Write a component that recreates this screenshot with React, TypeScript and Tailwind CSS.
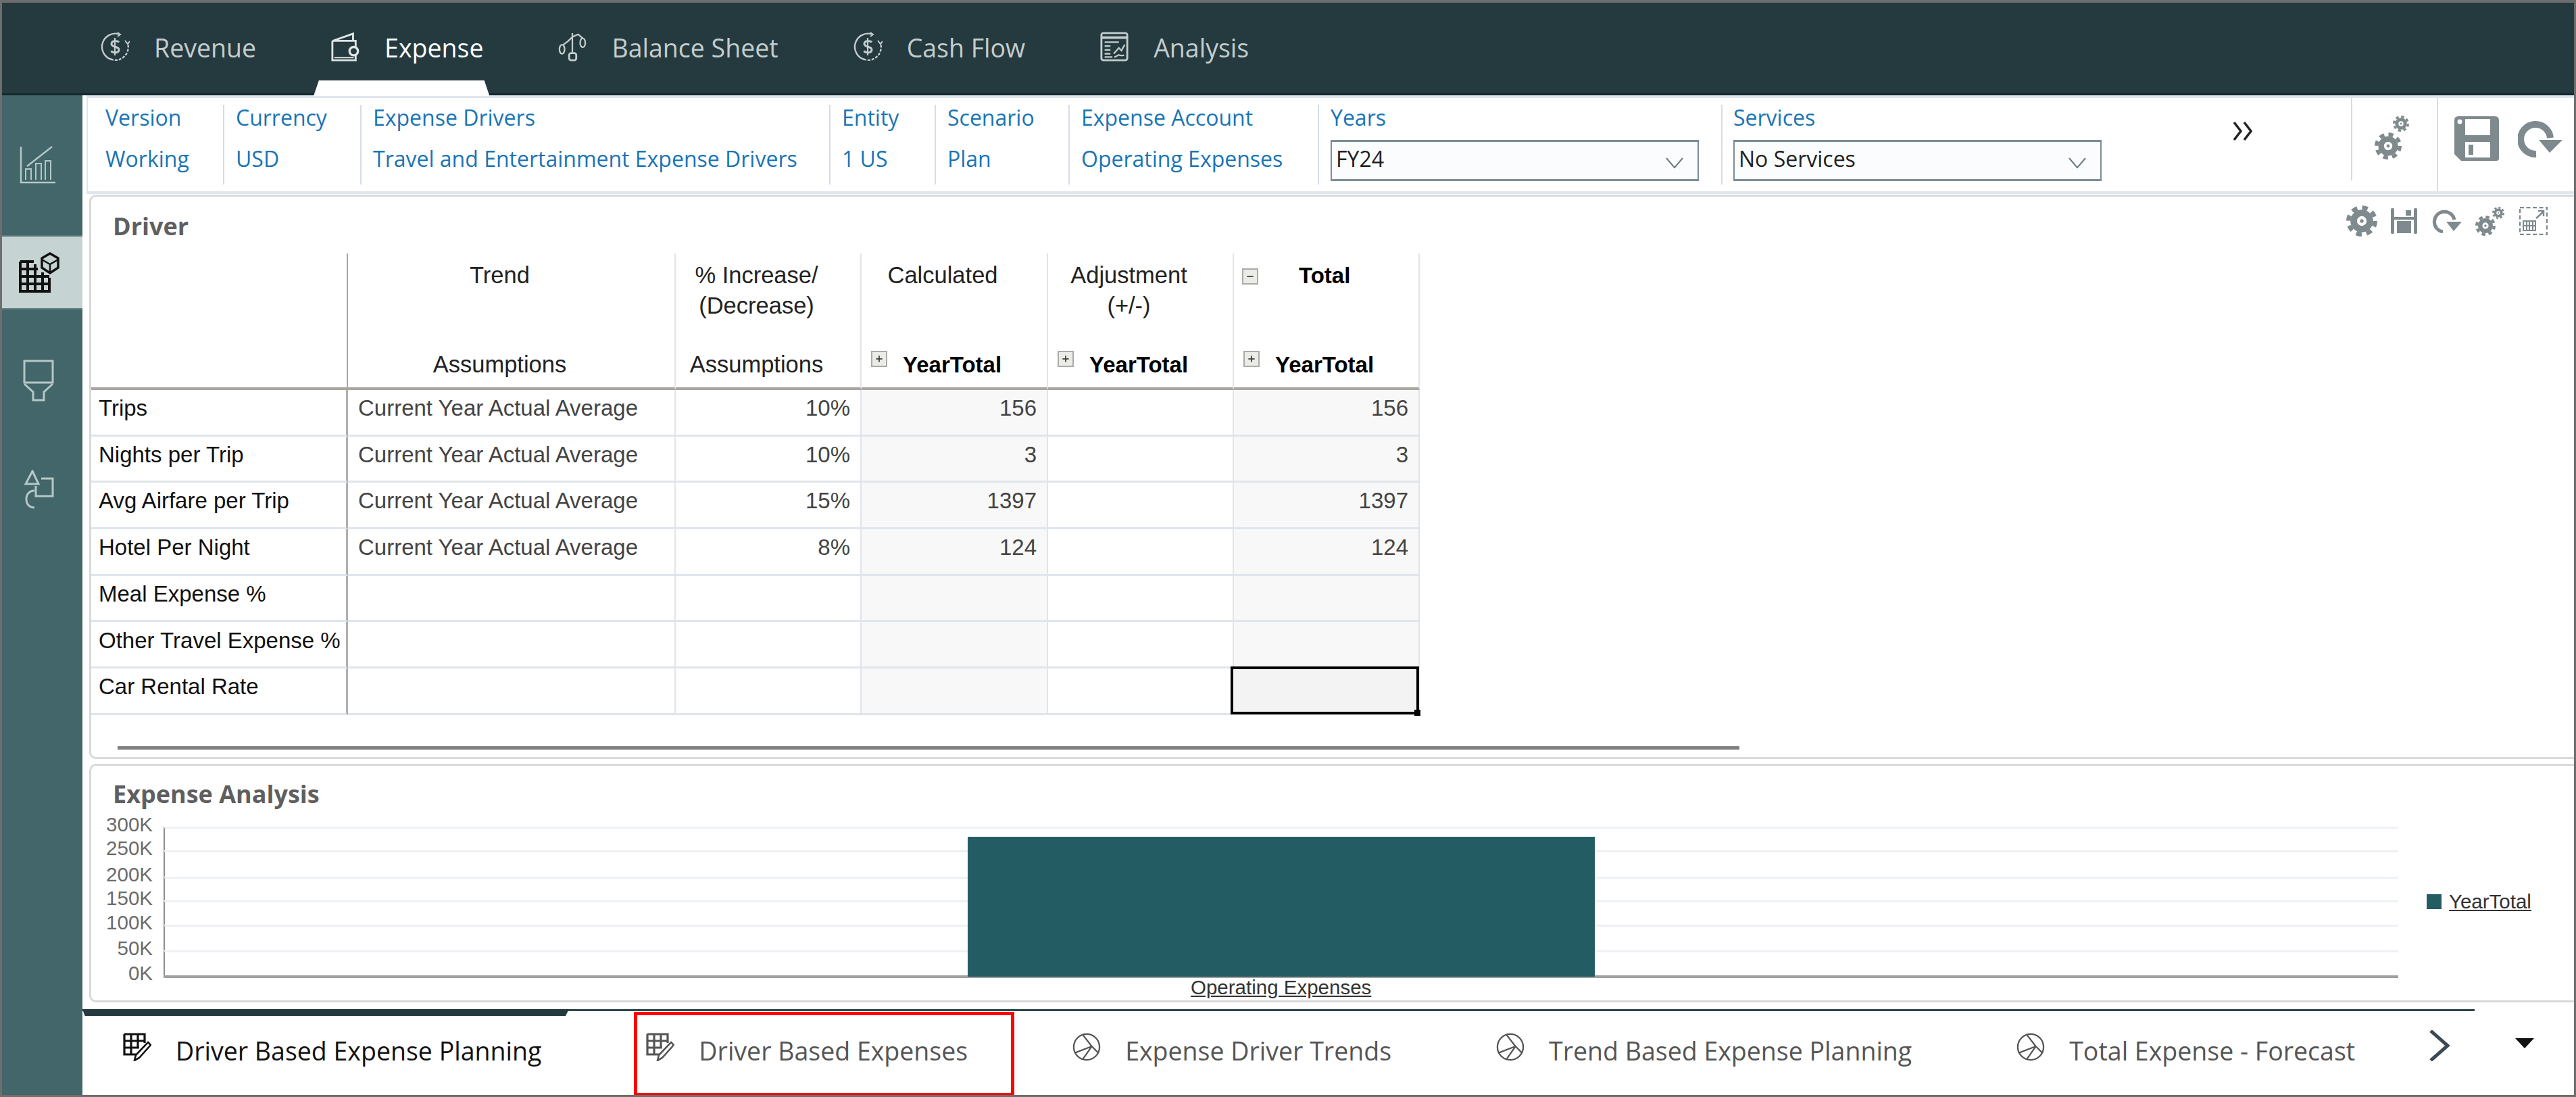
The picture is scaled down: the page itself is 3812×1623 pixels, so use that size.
import React from "react";

const Gear = ({ cx, cy, r }: { cx: number; cy: number; r: number }) => (
  <g fill="none" stroke="currentColor">
    <circle cx={cx} cy={cy} r={r * 0.52} strokeWidth={r * 0.42} />
    <circle cx={cx} cy={cy} r={r * 0.86} strokeWidth={r * 0.28} strokeDasharray={`${r * 0.36} ${r * 0.315}`} />
    <circle cx={cx} cy={cy} r={r * 0.12} fill="currentColor" stroke="none" />
  </g>
);

const Gears = ({ className }: { className: string }) => (
  <svg viewBox="0 0 52 66" className={className}>
    <Gear cx={20} cy={45} r={20} />
    <Gear cx={39} cy={12} r={12} />
  </svg>
);

const DollarCycle = ({ className }: { className: string }) => (
  <svg viewBox="0 0 44 44" className={className} fill="none" stroke="currentColor" strokeWidth="2.4">
    <path d="M28 3.5A19.5 19.5 0 0 0 17 41" />
    <path d="M16 40.5A19.5 19.5 0 0 0 27 41.5A19.5 19.5 0 0 0 41 17" strokeDasharray="4 2" />
    <path d="M26 1l4 3-4 3M37 13l4 5 3-4" strokeWidth="2" />
    <path d="M28 15.5c-2-2.500-11-3-11 2.500 0 5.500 11 3 11 8.500 0 5.500-9 5-11.500 2" strokeWidth="3" />
    <path d="M22 9v26" strokeWidth="2.2" />
  </svg>
);

const WalletIcon = ({ className }: { className: string }) => (
  <svg viewBox="0 0 44 46" className={className} fill="none" stroke="currentColor" strokeWidth="3">
    <path d="M3 14L34 3v10" />
    <path d="M2 14h36v11M38 36v8H2V14" />
    <circle cx="35" cy="30" r="6.500" strokeWidth="3.500" />
    <path d="M5 40h30" strokeWidth="2" />
  </svg>
);

const ScaleIcon = ({ className }: { className: string }) => (
  <svg viewBox="0 0 44 46" className={className} fill="none" stroke="currentColor" strokeWidth="2.400">
    <path d="M22 2v30M22 8l-6 6-8 6M22 8l9-4 7 6" />
    <ellipse cx="6" cy="27" rx="4" ry="7" />
    <ellipse cx="38" cy="17" rx="4" ry="7" />
    <rect x="17" y="33" width="11" height="11" rx="3" strokeWidth="3" />
  </svg>
);

const AnalysisIcon = ({ className }: { className: string }) => (
  <svg viewBox="0 0 44 46" className={className} fill="none" stroke="currentColor" strokeWidth="2.400">
    <rect x="2" y="2" width="40" height="42" rx="3" strokeWidth="3" />
    <path d="M2 9h40" strokeWidth="4" />
    <path d="M7 16h22M7 22h9M7 28h9M7 34h9M7 39h12" />
    <path d="M21 34l8-9 4 4 5-9" />
    <path d="M22 39c3 0 5-3 7-3s4 2 8 0" />
  </svg>
);

const ChartSideIcon = ({ className }: { className: string }) => (
  <svg viewBox="0 0 54 56" className={className} fill="none" stroke="currentColor" strokeWidth="2">
    <path d="M2 1v53h51" strokeWidth="2.500" />
    <path d="M11 30L48 1" strokeWidth="2.500" />
    <path d="M9 50V34h8v16M24 50V26h8v24M38 50V22h8v28" />
  </svg>
);

const GridCubeIcon = ({ className }: { className: string }) => (
  <svg viewBox="0 0 62 60" className={className} fill="none" stroke="#111">
    <path d="M3 14h20M3 14v44h43V38M3 25h26M3 36h43M3 47h43M14 14v44M25 18v40M36 30v28" strokeWidth="4" />
    <path d="M47 2l12 7v14l-12 8-12-8V9z" strokeWidth="3.500" />
    <path d="M35 11l12 7 12-7M47 18v12" strokeWidth="2.500" />
  </svg>
);

const FunnelIcon = ({ className }: { className: string }) => (
  <svg viewBox="0 0 46 62" className={className} fill="none" stroke="currentColor" strokeWidth="3">
    <rect x="2" y="2" width="42" height="32" />
    <path d="M2 36l13 12v12h16V48l13-12" />
  </svg>
);

const ShapesIcon = ({ className }: { className: string }) => (
  <svg viewBox="0 0 46 58" className={className} fill="none" stroke="currentColor" strokeWidth="3">
    <path d="M13 2l9 19H3z" />
    <path d="M26 13h17v26H18V24" />
    <path d="M16 31a11 12 0 0 0-12 13c0 7 5 12 12 12" />
  </svg>
);

const GridPencilIcon = ({ className }: { className: string }) => (
  <svg viewBox="0 0 42 42" className={className} fill="none" stroke="currentColor" strokeWidth="3.200">
    <path d="M2 2h30v13M2 2v30h17M2 12h30M2 22h22M12 2v30M22 2v20" />
    <path d="M37 14l4 4-17 19-7 4 2-8z" strokeWidth="2.600" />
  </svg>
);

const PieLinesIcon = ({ className }: { className: string }) => (
  <svg viewBox="0 0 44 44" className={className} fill="none" stroke="currentColor" strokeWidth="2.400">
    <circle cx="22" cy="22" r="20" />
    <path d="M16 3l14 18-14 20M4 31l26-10 10 10" />
  </svg>
);

const ToggleBox = ({ minus }: { minus?: boolean }) => (
  <span className="w-[24px] h-[24px] shrink-0 flex items-center justify-center bg-[#ecece6] border-2 border-[#a9aca8] -translate-y-[9px]">
    <svg viewBox="0 0 12 12" className="w-[14px] h-[14px]" stroke="#333" strokeWidth="1.400">
      <path d="M2 6h8" />
      {!minus && <path d="M6 2v8" />}
    </svg>
  </span>
);

const topTabs = [
  { label: "Revenue", Icon: DollarCycle },
  { label: "Expense", Icon: WalletIcon, active: true },
  { label: "Balance Sheet", Icon: ScaleIcon },
  { label: "Cash Flow", Icon: DollarCycle },
  { label: "Analysis", Icon: AnalysisIcon },
];

const povItems = [
  { label: "Currency", value: "USD", width: "w-[203px]" },
  { label: "Expense Drivers", value: "Travel and Entertainment Expense Drivers", width: "w-[694px]" },
  { label: "Entity", value: "1 US", width: "w-[156px]" },
  { label: "Scenario", value: "Plan", width: "w-[198px]" },
  { label: "Expense Account", value: "Operating Expenses", width: "w-[369px]" },
];

const rows = [
  ["Trips", "Current Year Actual Average", "10%", "156", "", "156"],
  ["Nights per Trip", "Current Year Actual Average", "10%", "3", "", "3"],
  ["Avg Airfare per Trip", "Current Year Actual Average", "15%", "1397", "", "1397"],
  ["Hotel Per Night", "Current Year Actual Average", "8%", "124", "", "124"],
  ["Meal Expense %", "", "", "", "", ""],
  ["Other Travel Expense %", "", "", "", "", ""],
  ["Car Rental Rate", "", "", "", "", ""],
];

const yAxis = [
  { label: "300K", h: "h-[35px]" },
  { label: "250K", h: "h-[39px]" },
  { label: "200K", h: "h-[35px]" },
  { label: "150K", h: "h-[36px]" },
  { label: "100K", h: "h-[38px]" },
  { label: "50K", h: "h-[37px]" },
];

const bottomTabs = [
  { label: "Driver Based Expense Planning", Icon: GridPencilIcon, active: true },
  { label: "Driver Based Expenses", Icon: GridPencilIcon, boxed: true },
  { label: "Expense Driver Trends", Icon: PieLinesIcon },
  { label: "Trend Based Expense Planning", Icon: PieLinesIcon },
  { label: "Total Expense - Forecast", Icon: PieLinesIcon },
];

const SelectBox = ({ value }: { value: string }) => (
  <div className="mt-[14px] w-[545px] h-[61px] flex items-center justify-between pl-[6px] pr-[21px] bg-[#fbfcfe] border-2 border-t-[3px] border-b-[3px] border-[#7b8d97] text-[#222]">
    <span className="-translate-y-[3px]">{value}</span>
    <svg viewBox="0 0 26 16" className="w-[26px] h-[16px] mt-[6px]" fill="none" stroke="#6b7a82" strokeWidth="2">
      <path d="M1 1l12 14L25 1" />
    </svg>
  </div>
);

const HeadCell = ({ lines, foot, bold, toggleTop }: { lines: string[]; foot: string; bold?: boolean; toggleTop?: boolean }) => (
  <th className="p-0 align-top font-normal border-b-4 border-r-2 border-r-[#dfe5ea] border-b-[#aaa6a0]">
    <div className="h-[198px] flex flex-col justify-between pt-[10px] pb-[11px] text-[#222] leading-[45px] text-[34.500px]">
      {toggleTop ? (
        <div className="flex pl-[12px] gap-[60px] text-[33px]">
          <span className="mt-[21px]"><ToggleBox minus /></span>
          <span className="font-bold text-black">{lines[0]}</span>
        </div>
      ) : (
        <div className="text-center pr-[34px]">
          {lines.map((l) => (
            <div key={l}>{l}</div>
          ))}
        </div>
      )}
      {bold ? (
        <div className="flex items-center pl-[14px] gap-[23px] font-bold text-black text-[33px]">
          <ToggleBox />
          <span>{foot}</span>
        </div>
      ) : (
        <div className="text-center pr-[34px]">{foot}</div>
      )}
    </div>
  </th>
);

export default function App() {
  return (
    <div className="w-[3812px] h-[1623px] flex flex-col bg-white border-t-4 border-b-[3px] border-x-[3px] border-[#6e6e6e] overflow-hidden font-['Open_Sans',sans-serif]">
      {/* top module tabs */}
      <div className="h-[137px] shrink-0 flex items-center pl-[145px] gap-[110px] bg-[#253a3f] border-b-[3px] border-[#14292d] text-[37.500px] text-[#c4cdcd]">
        {topTabs.map(({ label, Icon, active }) => (
          <div key={label} className={`relative flex items-center gap-[36px] ${active ? "text-white" : ""}`}>
            <Icon className={`w-[44px] h-[44px] shrink-0 -translate-y-[2px] ${active ? "text-[#dfe4e4]" : ""}`} />
            <span className="leading-[44px]">{label}</span>
            {active && (
              <span className="absolute left-[-25px] right-[-9px] top-[70px] h-[23px] bg-white [clip-path:polygon(3%_0,97%_0,100%_100%,0_100%)]" />
            )}
          </div>
        ))}
      </div>

      <div className="flex-1 flex min-h-0">
        {/* side nav */}
        <div className="w-[119px] shrink-0 flex flex-col bg-[#426669] text-[#b5c7c7]">
          <div className="h-[207px] flex items-start pt-[75px] pl-[26px]">
            <ChartSideIcon className="w-[54px] h-[56px]" />
          </div>
          <div className="h-[110px] flex items-center pl-[24px] bg-[#c6d3d3] border-y-2 border-[#5b7b7e]">
            <GridCubeIcon className="w-[62px] h-[60px]" />
          </div>
          <div className="pt-[74px] pl-[31px]">
            <FunnelIcon className="w-[46px] h-[62px]" />
          </div>
          <div className="pt-[101px] pl-[32px]">
            <ShapesIcon className="w-[46px] h-[58px]" />
          </div>
        </div>

        <div className="flex-1 min-w-0 flex flex-col">
          {/* POV bar */}
          <div className="ml-[6px] h-[146px] shrink-0 flex items-start border-y-[4px] border-l-[2px] border-[#dfe6ec] text-[32px] text-[#1a75b5]">
            <div className="mt-[10px] w-[200px] h-[118px] pl-[26px] flex flex-col gap-[23px] leading-[38px]">
              <span>Version</span>
              <span>Working</span>
            </div>
            {povItems.map((p) => (
              <div key={p.label} className={`mt-[10px] ${p.width} h-[118px] pl-[17px] flex flex-col gap-[23px] leading-[38px] border-l-2 border-[#d5dde5] whitespace-nowrap`}>
                <span>{p.label}</span>
                <span>{p.value}</span>
              </div>
            ))}
            <div className="mt-[10px] w-[597px] h-[118px] pl-[17px] leading-[38px] border-l-2 border-[#d5dde5]">
              <span>Years</span>
              <SelectBox value="FY24" />
            </div>
            <div className="mt-[10px] w-[932px] h-[118px] pl-[16px] leading-[38px] border-l-2 border-[#d5dde5] flex">
              <div>
                <span>Services</span>
                <SelectBox value="No Services" />
              </div>
              <svg viewBox="0 0 32 28" className="ml-[193px] mt-[25px] w-[32px] h-[28px] shrink-0" fill="none" stroke="#222" strokeWidth="3.500">
                <path d="M3 1l10 13L3 27M18 1l10 13-10 13" />
              </svg>
            </div>
            <div className="w-[127px] h-[122px] flex items-start pl-[33px] pt-[26px] border-l-2 border-[#d5dde5] text-[#7f8a8c]">
              <Gears className="w-[52px] h-[66px]" />
            </div>
            <div className="self-stretch flex-1 flex items-start gap-[28px] pl-[24px] pt-[27px] border-l-2 border-[#d5dde5] text-[#7f8a8e]">
              <svg viewBox="0 0 66 66" className="w-[66px] h-[66px] shrink-0">
                <path d="M6 0H60Q66 0 66 6V62Q66 66 62 66H10L0 56V6Q0 0 6 0z" fill="currentColor" />
                <circle cx="8" cy="8" r="3.500" fill="#fff" />
                <rect x="16" y="4" width="37" height="24" fill="#fff" />
                <rect x="16" y="38" width="37" height="23" fill="#fff" />
                <rect x="21" y="42" width="7" height="15" fill="currentColor" />
              </svg>
              <svg viewBox="0 0 66 56" className="w-[66px] h-[56px] shrink-0 mt-[5px]">
                <path d="M27 51A22 22 0 1 1 48 27" fill="none" stroke="currentColor" strokeWidth="10" />
                <polygon points="31,30 66,30 47,49" fill="currentColor" />
              </svg>
            </div>
          </div>

          {/* Driver card */}
          <div className="mt-[1px] ml-[10px] h-[835px] shrink-0 flex flex-col border-t-[3px] border-l-[3px] border-b-[3px] border-[#d9d9d9] rounded-l-[10px]">
            <div className="h-[84px] shrink-0 flex items-start justify-between pl-[32px] pr-[39px] text-[#7f8a8e]">
              <h2 className="mt-[21px] text-[36px] leading-[46px] font-bold text-[#5f5f5f]">Driver</h2>
              <div className="mt-[13px] flex items-center">
                <svg viewBox="0 0 46 46" className="w-[46px] h-[46px]"><Gear cx={23} cy={23} r={23} /></svg>
                <svg viewBox="0 0 39 38" className="ml-[20px] w-[39px] h-[38px]" fill="currentColor">
                  <rect width="5" height="38" rx="2" />
                  <rect x="34" width="5" height="38" rx="2" />
                  <rect y="13" width="39" height="4" />
                  <rect x="22" y="3" width="8" height="8" />
                  <rect x="9" y="19" width="21" height="18" />
                </svg>
                <svg viewBox="0 0 44 35" className="ml-[22px] w-[44px] h-[35px]">
                  <path d="M16 33A15 15 0 1 1 33 15" fill="none" stroke="currentColor" strokeWidth="5" />
                  <polygon points="21,18 44,18 32,32" fill="currentColor" />
                </svg>
                <svg viewBox="0 0 44 43" className="ml-[20px] w-[44px] h-[43px]">
                  <Gear cx={15} cy={28} r={15} />
                  <Gear cx={34} cy={9} r={9} />
                </svg>
                <svg viewBox="0 0 42 42" className="ml-[21px] w-[42px] h-[42px]" fill="none" stroke="currentColor">
                  <rect x="1" y="1" width="40" height="40" strokeWidth="2.500" strokeDasharray="6 3.500" />
                  <path d="M25 17l11-10M28 6h8v8" strokeWidth="2.500" />
                  <path d="M6 21h18v14H6zM6 28h18M11 21v14M15 21v14M20 21v14" strokeWidth="2" />
                </svg>
              </div>
            </div>

            <table className="w-[1966px] table-fixed border-separate border-spacing-0 font-['Liberation_Sans',sans-serif] text-[33px]">
              <colgroup>
                <col className="w-[380px]" />
                <col className="w-[485px]" />
                <col className="w-[275px]" />
                <col className="w-[276px]" />
                <col className="w-[275px]" />
                <col className="w-[275px]" />
              </colgroup>
              <thead>
                <tr>
                  <th className="p-0 border-b-4 border-r-2 border-[#aaa6a0]" />
                  <HeadCell lines={["Trend"]} foot="Assumptions" />
                  <HeadCell lines={["% Increase/", "(Decrease)"]} foot="Assumptions" />
                  <HeadCell lines={["Calculated"]} foot="YearTotal" bold />
                  <HeadCell lines={["Adjustment", "(+/-)"]} foot="YearTotal" bold />
                  <HeadCell lines={["Total"]} foot="YearTotal" bold toggleTop />
                </tr>
              </thead>
              <tbody>
                {rows.map((r, i) => (
                  <tr key={r[0]}>
                    <td className="h-[68.700px] pl-[11px] pb-[12px] whitespace-nowrap text-[#111] border-b-[3px] border-r-[3px] border-b-[#dfe5ec] border-r-[#b3afaa]">{r[0]}</td>
                    <td className="pl-[15px] pb-[12px] whitespace-nowrap text-[#444] border-b-[3px] border-r-2 border-[#dfe5ec]">{r[1]}</td>
                    <td className="pr-[15px] pb-[12px] text-right text-[#444] border-b-[3px] border-r-2 border-[#dfe5ec]">{r[2]}</td>
                    <td className="pr-[15px] pb-[12px] text-right text-[#444] bg-[#f8f8f8] border-b-[3px] border-r-2 border-[#dfe5ec]">{r[3]}</td>
                    <td className="pr-[15px] pb-[12px] text-right text-[#444] border-b-[3px] border-r-2 border-[#dfe5ec]">{r[4]}</td>
                    <td className="relative pr-[15px] pb-[12px] text-right text-[#444] bg-[#f8f8f8] border-b-[3px] border-r-2 border-[#dfe5ec]">
                      {r[5]}
                      {i === rows.length - 1 && (
                        <span className="absolute -left-[5px] -top-[3px] -right-[1px] -bottom-[2px] border-4 border-black bg-[#f3f3f3]">
                          <span className="absolute -right-[6px] -bottom-[6px] w-[9px] h-[9px] bg-black" />
                        </span>
                      )}
                    </td>
                  </tr>
                ))}
              </tbody>
            </table>

            <div className="mt-[46px] ml-[39px] w-[2400px] h-[5px] shrink-0 bg-[#7f7f7f]" />
          </div>

          {/* Expense Analysis card */}
          <div className="mt-[7px] ml-[10px] h-[353px] shrink-0 flex flex-col border-t-[3px] border-l-[3px] border-b-[3px] border-[#d9d9d9] rounded-l-[10px]">
            <h2 className="mt-[19px] ml-[32px] text-[36px] leading-[46px] font-bold text-[#5f5f5f]">Expense Analysis</h2>
            <div className="mt-[25px] flex font-['Liberation_Sans',sans-serif] text-[29.500px]">
              <div className="w-[3414px] shrink-0">
                <div className="relative">
                  {yAxis.map((t) => (
                    <div key={t.label} className={`${t.h} flex`}>
                      <span className="w-[107px] pr-[16px] text-right leading-none text-[#6b6b6b] -translate-y-[18px]">{t.label}</span>
                      <div className="flex-1 border-t-[3px] border-l-2 border-t-[#edf0f4] border-l-[#8d8d8d]" />
                    </div>
                  ))}
                  <div className="flex h-[4px]">
                    <span className="w-[107px] pr-[16px] text-right leading-none text-[#6b6b6b] -translate-y-[18px] h-[4px]">0K</span>
                    <div className="flex-1 bg-[#a0a0a0]" />
                  </div>
                  <div className="absolute left-[1297px] w-[928px] top-[15px] bottom-[2px] bg-[#245c64]" />
                </div>
                <div className="pl-[1627px] text-[#333] underline leading-[27px]">Operating Expenses</div>
              </div>
              <div className="ml-[42px] mt-[97px] flex items-start gap-[11px] text-[#333]">
                <span className="mt-[3px] w-[22px] h-[22px] bg-[#245c64]" />
                <span className="underline leading-[28px]">YearTotal</span>
              </div>
            </div>
          </div>

          {/* bottom tabs */}
          <div className="relative mt-[10px] w-[3540px] h-[3px] shrink-0 bg-[#2f464b]">
            <span className="absolute left-0 top-0 w-[720px] h-[10px] bg-[#253a3f] [clip-path:polygon(0_0,100%_0,99.300%_100%,0.500%_100%)]" />
          </div>
          <div className="flex-1 flex items-center pl-[60px] pb-[6px] text-[37.500px] text-[#555]">
            <div className="flex items-center gap-[155px]">
              {bottomTabs.map(({ label, Icon, active, boxed }) => (
                <div key={label} className={`relative flex items-center gap-[36px] whitespace-nowrap ${active ? "text-[#111]" : ""}`}>
                  <Icon className="w-[42px] h-[42px] shrink-0 -translate-y-[6px]" />
                  <span className="leading-[44px]">{label}</span>
                  {boxed && (
                    <span className="absolute -left-[18px] -right-[69px] -top-[36px] -bottom-[45px] border-[5px] border-[#ff0000]" />
                  )}
                </div>
              ))}
            </div>
            <svg viewBox="0 0 30 46" className="ml-[110px] w-[30px] h-[46px] shrink-0 -translate-y-[8px]" fill="none" stroke="#3c4a55" strokeWidth="5">
              <path d="M2 1l25 22L2 45" />
            </svg>
            <svg viewBox="0 0 28 15" className="ml-[97px] w-[28px] h-[15px] shrink-0 -translate-y-[12px]">
              <polygon points="0,0 28,0 14,15" fill="#111" />
            </svg>
          </div>
        </div>
      </div>
    </div>
  );
}
